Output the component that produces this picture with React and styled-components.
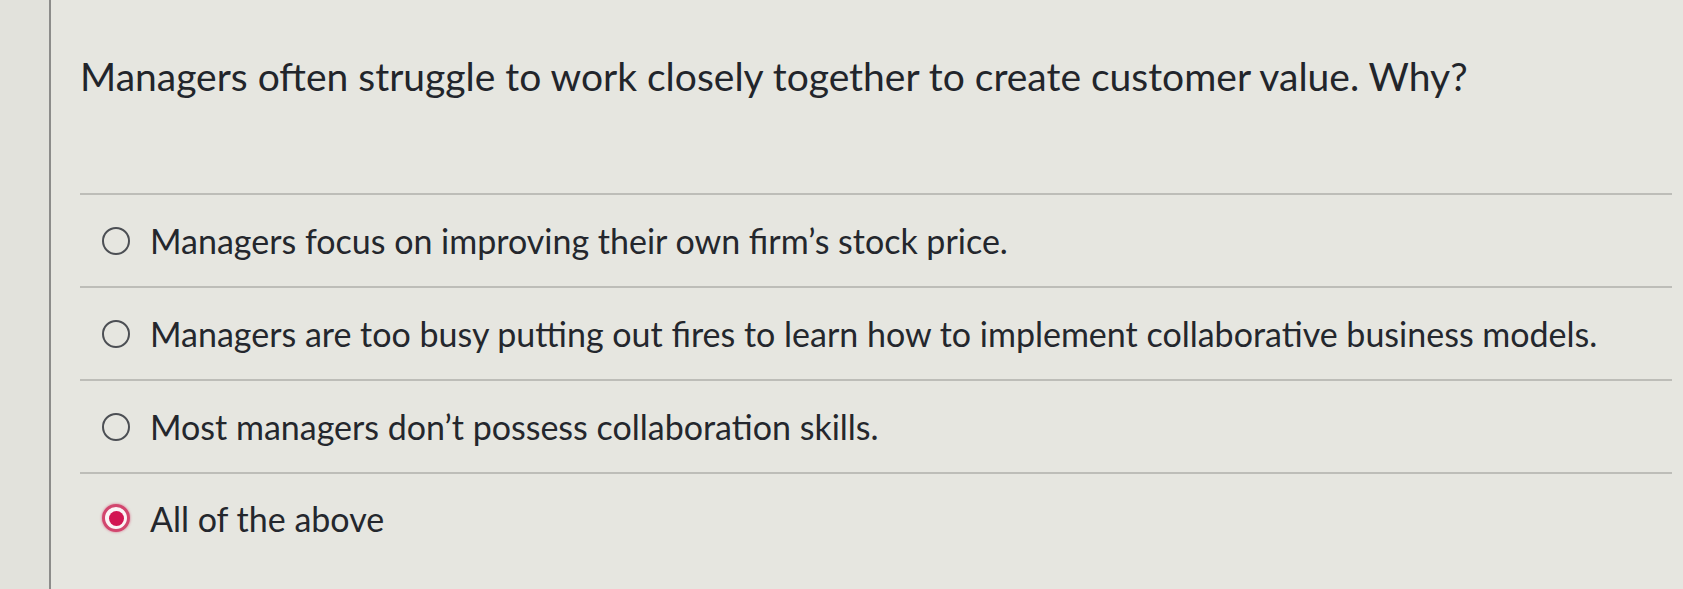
import React from "react";
import styled, { createGlobalStyle } from "styled-components";

const Global = createGlobalStyle`
  html, body { margin: 0; padding: 0; }
  body {
    background: #e6e6e0;
    font-family: Lato, "Open Sans", "Liberation Sans", sans-serif;
    color: #24272d;
  }
`;

const Page = styled.div`
  display: flex;
  width: 1683px;
  height: 589px;
  overflow: hidden;
  background: #e6e6e0;
`;

const Gutter = styled.div`
  width: 49px;
  flex: none;
  background: #e2e2dc;
  border-right: 2px solid #8c8c8a;
`;

const Content = styled.div`
  flex: 1;
  padding: 51px 11px 0 29px;
  display: flex;
  flex-direction: column;
`;

const Title = styled.h1`
  margin: 0;
  font-size: 39px;
  font-weight: 400;
  line-height: 50px;
  color: #22252b;
`;

const OptionList = styled.div`
  margin-top: 92px;
  border-top: 2px solid #bdbdb8;
  display: flex;
  flex-direction: column;
`;

const Option = styled.label`
  display: flex;
  align-items: center;
  gap: 20px;
  height: ${(p) => (p.$last ? "88px" : "93px")};
  padding-left: 22px;
  box-sizing: border-box;
  border-bottom: ${(p) => (p.$last ? "none" : "2px solid #bdbdb8")};
  font-size: 34px;
  color: #24272d;
  white-space: nowrap;
`;

const Radio = styled.span`
  width: 28px;
  height: 28px;
  flex: none;
  box-sizing: border-box;
  border-radius: 50%;
  border: ${(p) => (p.$checked ? "3px solid #d2466e" : "2px solid #4c4f54")};
  background: ${(p) => (p.$checked ? "#fbf4f6" : "transparent")};
  display: flex;
  align-items: center;
  justify-content: center;
  box-shadow: ${(p) => (p.$checked ? "0 0 2px 1px rgba(210,70,110,0.35)" : "none")};
`;

const Dot = styled.span`
  width: 15px;
  height: 15px;
  border-radius: 50%;
  background: #d21552;
`;

const options = [
  "Managers focus on improving their own firm\u2019s stock price.",
  "Managers are too busy putting out fires to learn how to implement collaborative business models.",
  "Most managers don\u2019t possess collaboration skills.",
  "All of the above",
];

export default function App() {
  return (
    <>
      <Global />
      <Page>
        <Gutter />
        <Content>
          <Title>Managers often struggle to work closely together to create customer value. Why?</Title>
          <OptionList>
            {options.map((o, i) => (
              <Option key={i} $last={i === options.length - 1}>
                <Radio $checked={i === 3}>{i === 3 && <Dot />}</Radio>
                <span>{o}</span>
              </Option>
            ))}
          </OptionList>
        </Content>
      </Page>
    </>
  );
}
